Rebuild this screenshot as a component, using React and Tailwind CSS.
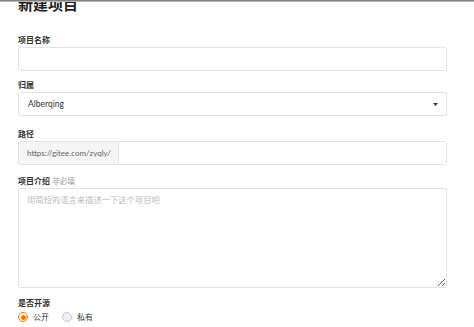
export default function App() {
  const font = "font-['Lato','Noto_Sans_CJK_SC',sans-serif]";
  return (
    <div className={`relative w-[474px] h-[327px] overflow-hidden bg-white ${font}`}>
      <div className="absolute top-0 inset-x-0 h-[2px] bg-linear-to-b from-[#6b6b6b] to-[#d0d0d0]" />
      <div className="pl-[18px] pr-[27px]">
        <div className="mt-[-6px] mb-[20px] text-[15px] leading-[20px] font-bold text-[#222]">新建项目</div>

        <div className="text-[8px] leading-[12px] font-bold text-[#333] mb-[1px]">项目名称</div>
        <div className="h-[24px] border border-[#e3e3e3] rounded-[2px] bg-white" />

        <div className="mt-[8px] text-[8px] leading-[12px] font-bold text-[#333] mb-[1px]">归属</div>
        <div className="h-[24px] border border-[#e3e3e3] rounded-[2px] bg-white flex items-center justify-between pl-[9px] pr-[8px]">
          <span className="text-[8.5px] text-[#333]">Alberqing</span>
          <svg width="5" height="3" viewBox="0 0 5 3"><path d="M0 0h5L2.5 3z" fill="#333" /></svg>
        </div>

        <div className="mt-[12px] text-[8px] leading-[12px] font-bold text-[#333] mb-[1px]">路径</div>
        <div className="h-[24px] border border-[#e3e3e3] rounded-[2px] flex">
          <div className="w-[100px] bg-[#f5f5f5] border-r border-[#e3e3e3] flex items-center pl-[8px] text-[8px] text-[#666]">https://gitee.com/zyqly/</div>
          <div className="flex-1 bg-white" />
        </div>

        <div className="mt-[10px] text-[8px] leading-[12px] font-bold text-[#333] mb-[1px]">
          项目介绍 <span className="font-normal text-[#999] text-[7.7px]">非必填</span>
        </div>
        <textarea
          className="block w-full h-[100px] border border-[#e3e3e3] rounded-[2px] bg-white px-[8px] py-[5px] text-[8.3px] leading-[12px] outline-none placeholder:text-[#bbb]"
          placeholder="用简短的语言来描述一下这个项目吧"
        />

        <div className="mt-[9px] text-[8px] leading-[12px] font-bold text-[#333]">是否开源</div>
        <div className="mt-[2px] flex items-center h-[12px] text-[8px] text-[#333]">
          <span className="w-[10px] h-[10px] rounded-full border border-[#fe7300] bg-white flex items-center justify-center">
            <span className="w-[5px] h-[5px] rounded-full bg-[#fe7300]" />
          </span>
          <span className="ml-[5px]">公开</span>
          <span className="ml-[13px] w-[10px] h-[10px] rounded-full border border-[#c8c8c8] bg-[#f0f0f0]" />
          <span className="ml-[5px]">私有</span>
        </div>
      </div>
    </div>
  );
}
